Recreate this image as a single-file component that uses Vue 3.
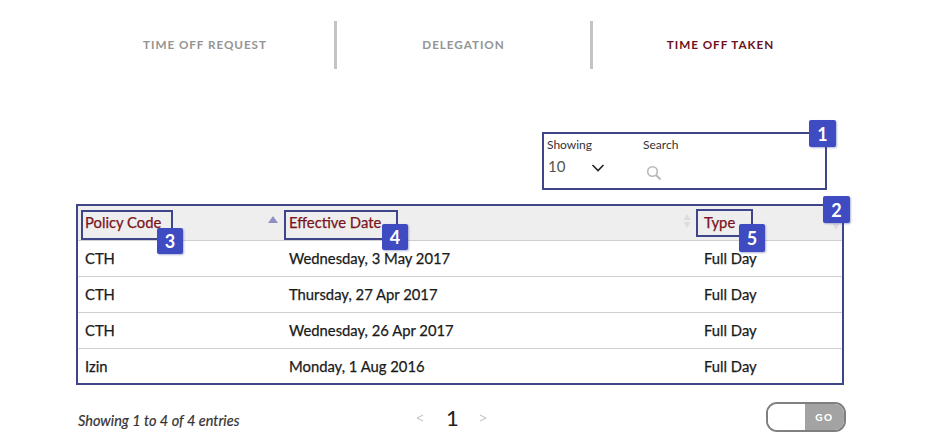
<script setup>
const tabs = [
  { label: 'TIME OFF REQUEST', active: false },
  { label: 'DELEGATION', active: false },
  { label: 'TIME OFF TAKEN', active: true },
]
const rows = [
  ['CTH', 'Wednesday, 3 May 2017', 'Full Day'],
  ['CTH', 'Thursday, 27 Apr 2017', 'Full Day'],
  ['CTH', 'Wednesday, 26 Apr 2017', 'Full Day'],
  ['Izin', 'Monday, 1 Aug 2016', 'Full Day'],
]
</script>

<template>
  <div class="page">
    <nav class="tabs">
      <div v-for="t in tabs" :key="t.label" class="tab" :class="{ active: t.active }">{{ t.label }}</div>
    </nav>

    <div class="filter">
      <div class="showing">
        <div class="cap">Showing</div>
        <div class="select">
          <span>10</span>
          <svg width="14" height="8" viewBox="0 0 14 8"><path d="M1.5 1l5.5 5.500L12.500 1" fill="none" stroke="#222" stroke-width="1.600"/></svg>
        </div>
      </div>
      <div class="search">
        <div class="cap">Search</div>
        <svg class="lens" width="16" height="16" viewBox="0 0 16 16"><circle cx="6.500" cy="6.500" r="4.800" fill="none" stroke="#b8b8b8" stroke-width="1.600"/><path d="M10 10l4.500 4.500" stroke="#b8b8b8" stroke-width="2"/></svg>
      </div>
      <span class="badge b1">1</span>
    </div>

    <div class="tablewrap">
      <table>
        <thead>
          <tr>
            <th class="c1">
              Policy Code
              <span class="mark m3"></span><span class="badge b3">3</span>
              <svg class="sort" width="10" height="7" viewBox="0 0 10 7"><path d="M5 0l5 7H0z" fill="#8e8fc4"/></svg>
            </th>
            <th class="c2">
              Effective Date
              <span class="mark m4"></span><span class="badge b4">4</span>
              <svg class="sort both" width="8" height="14" viewBox="0 0 8 14"><path d="M4 0l3.500 6H.5zM4 14L.5 8h7z" fill="#dcdcdc"/></svg>
            </th>
            <th class="c3">
              Type
              <span class="mark m5"></span><span class="badge b5">5</span>
              <svg class="sort both last" width="8" height="14" viewBox="0 0 8 14"><path d="M4 0l3.500 6H.5zM4 14L.5 8h7z" fill="#dcdcdc"/></svg>
            </th>
          </tr>
        </thead>
        <tbody>
          <tr v-for="(r, i) in rows" :key="i">
            <td v-for="(c, j) in r" :key="j">{{ c }}</td>
          </tr>
        </tbody>
      </table>
      <span class="badge b2">2</span>
    </div>

    <footer class="foot">
      <div class="info">Showing 1 to 4 of 4 entries</div>
      <div class="pager">
        <svg width="8" height="8" viewBox="0 0 8 8"><path d="M7 1L1 4l6 3" fill="none" stroke="#bbb"/></svg>
        <span class="num">1</span>
        <svg width="8" height="8" viewBox="0 0 8 8"><path d="M1 1l6 3-6 3" fill="none" stroke="#bbb"/></svg>
      </div>
      <div class="go">
        <span class="go-input"></span>
        <span class="go-btn">GO</span>
      </div>
    </footer>
  </div>
</template>

<style scoped>
.page {
  position: relative;
  width: 931px;
  height: 440px;
  overflow: hidden;
  background: #fff;
  font-family: Lato, "Open Sans", sans-serif;
  color: #1a1a1a;
}
.tabs {
  display: grid;
  grid-template-columns: 261px 256px 255px;
  margin: 21px 0 0 76px;
  width: 772px;
  height: 48px;
}
.tab {
  display: flex;
  align-items: center;
  justify-content: center;
  padding-bottom: 2px;
  box-sizing: border-box;
  font-size: 11.700px;
  font-weight: 700;
  letter-spacing: 0.95px;
  color: #949494;
  border-right: 3px solid #c4c4c4;
}
.tab.active {
  color: #6d1220;
  border-right: 0;
}
.filter {
  position: relative;
  display: flex;
  box-sizing: border-box;
  width: 285px;
  height: 58px;
  margin: 63px 0 0 542px;
  padding: 4px 3px;
  border: 2px solid #3f4589;
  color: #333;
}
.cap {
  font-size: 12px;
  line-height: 14px;
}
.showing {
  width: 96px;
}
.select {
  display: flex;
  align-items: center;
  gap: 26px;
  margin-left: 1px;
  margin-top: 5px;
  font-size: 15px;
  line-height: 18px;
  color: #555;
}
.select svg {
  margin-top: 3px;
}
.lens {
  display: block;
  margin: 13px 0 0 3px;
}
.badge {
  position: absolute;
  display: flex;
  align-items: center;
  justify-content: center;
  width: 27px;
  height: 27px;
  background: #3f4bc0;
  color: #fff;
  font-size: 18px;
  font-weight: 700;
  border-radius: 2px;
  box-shadow: 1px 1px 2px rgba(60, 70, 160, 0.4);
  z-index: 3;
  -webkit-text-stroke: 0;
}
.b1 { right: -11px; top: -14px; }
.b2 { right: -8px; top: -10px; }
.b3 { left: 79px; top: 22px; width: 26px; height: 26px; }
.b4 { left: 100px; top: 18px; width: 26px; height: 26px; }
.b5 { left: 42px; top: 18px; width: 26px; height: 28px; }
.tablewrap {
  position: relative;
  box-sizing: border-box;
  width: 768px;
  height: 181px;
  margin: 14px 0 0 76px;
  border: 2px solid #3f4589;
}
table {
  width: 100%;
  border-collapse: collapse;
  table-layout: fixed;
}
th {
  position: relative;
  height: 34px;
  padding: 0 7px 2px;
  background: #eeeeee;
  border-bottom: 1px solid #cfcfcf;
  color: #7a1420;
  font-size: 14.800px;
  font-weight: 400;
  -webkit-text-stroke: 0.25px #7a1420;
  text-align: left;
  box-sizing: border-box;
}
th.c1 { width: 204px; }
th.c2 { width: 415px; }
td {
  height: 36px;
  padding: 0 7px;
  border-bottom: 1px solid #cfcfcf;
  font-size: 14.800px;
  -webkit-text-stroke: 0.25px #1a1a1a;
  box-sizing: border-box;
}
tbody tr:last-child td { border-bottom: 0; height: 35px; padding-top: 1px; }
.mark {
  position: absolute;
  border: 2px solid #3f4589;
  box-sizing: border-box;
}
.m3 { left: 3px; top: 4px; width: 92px; height: 30px; }
.m4 { left: 2px; top: 4px; width: 114px; height: 30px; }
.m5 { left: -1px; top: 3px; width: 57px; height: 28px; }
.sort {
  position: absolute;
  right: 4px;
  top: 10px;
}
.sort.both { right: 6px; top: 8px; }
.sort.last { right: 2px; top: 10px; }
.foot {
  position: relative;
  display: flex;
  align-items: center;
  margin: 17px 0 0 78px;
  width: 768px;
  height: 30px;
}
.info {
  width: 338px;
  margin-top: 6px;
  font-size: 14.500px;
  font-style: italic;
  color: #333;
  -webkit-text-stroke: 0.2px #333;
}
.pager {
  display: flex;
  align-items: center;
  gap: 22px;
  width: 350px;
  margin-top: 1px;
}
.num {
  margin-right: -2px;
  font-size: 22px;
  line-height: 24px;
  color: #222;
}
.go {
  display: flex;
  box-sizing: border-box;
  width: 80px;
  height: 30px;
  border: 2px solid #808080;
  border-radius: 11px;
  overflow: hidden;
}
.go-input {
  flex: 1;
  background: #fff;
}
.go-btn {
  display: flex;
  align-items: center;
  justify-content: center;
  width: 39px;
  background: #a3a3a3;
  color: #fff;
  font-size: 10px;
  font-weight: 900;
  letter-spacing: 1.500px;
}
</style>
